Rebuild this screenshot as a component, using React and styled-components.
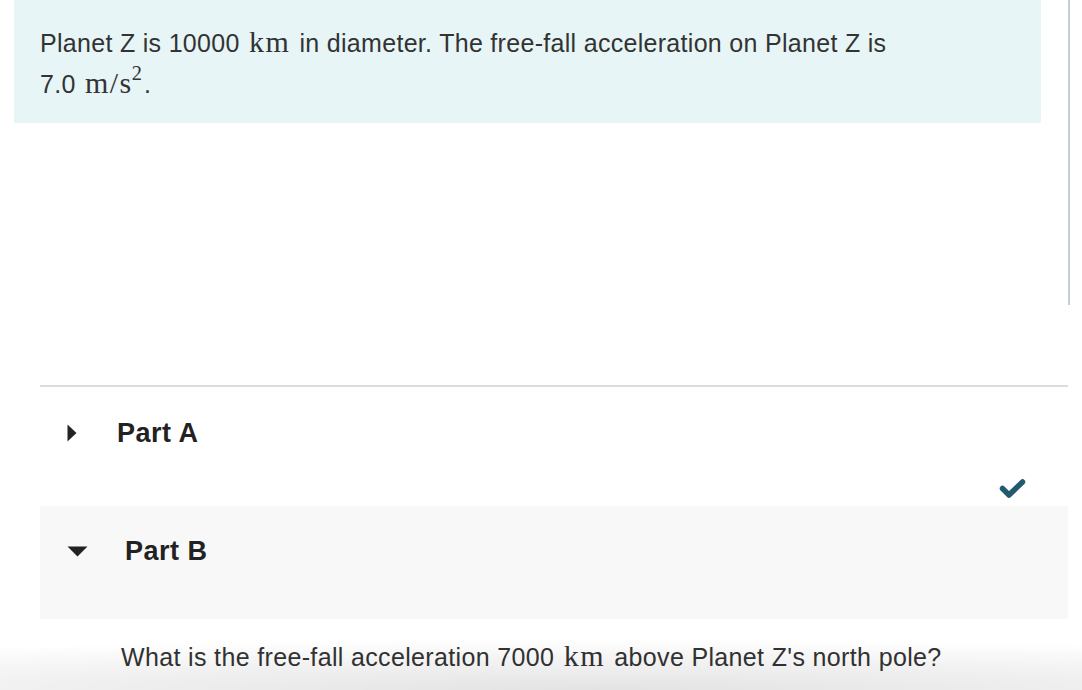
import React from "react";
import styled, { createGlobalStyle } from "styled-components";

const Global = createGlobalStyle`
  html, body { margin: 0; padding: 0; background: #fff; }
  body { font-family: "Liberation Sans", Arial, sans-serif; color: #333; width: 1082px; height: 690px; overflow: hidden; }
`;

const Page = styled.div`
  position: relative;
  width: 1082px;
  height: 690px;
  overflow: hidden;
`;

const Intro = styled.div`
  margin-left: 14px;
  width: 1027px;
  height: 123px;
  box-sizing: border-box;
  background: #e7f5f6;
  padding: 22px 0 0 26px;
  font-size: 25px;
  letter-spacing: 0.3px;
  line-height: 39px;
  color: #333;
`;

const Math = styled.span`
  font-family: "Liberation Serif", "DejaVu Serif", serif;
  font-size: 1.2em;
  letter-spacing: 1.5px;
  padding: 0 2px;
`;

const Sup = styled.sup`
  font-size: 0.68em;
  line-height: 0;
  letter-spacing: 0;
  margin-left: -1px;
  vertical-align: 0.65em;
`;

const ScrollTrack = styled.div`
  position: absolute;
  left: 1068px;
  top: 0;
  width: 2px;
  height: 305px;
  background: #c2cfdc;
`;

const Parts = styled.div`
  margin: 262px 14px 0 40px;
  border-top: 2px solid #dcdcdc;
`;

const PartRow = styled.div`
  display: flex;
  height: ${(p) => p.$h}px;
  box-sizing: border-box;
  align-items: flex-start;
  padding-top: ${(p) => p.$pt}px;
  background: ${(p) => (p.$open ? "#f8f8f8" : "transparent")};
  position: relative;
`;

const Arrow = styled.div`
  width: ${(p) => p.$w}px;
  height: 30px;
  display: flex;
  align-items: center;
  justify-content: center;
  margin-left: ${(p) => p.$ml}px;
`;

const PartTitle = styled.div`
  font-weight: bold;
  font-size: 27px;
  letter-spacing: 0.5px;
  line-height: 30px;
  color: #222;
  margin-left: ${(p) => p.$ml}px;
`;

const Check = styled.svg`
  position: absolute;
  right: 42px;
  top: 91px;
`;

const Question = styled.div`
  padding: 20px 0 0 121px;
  font-size: 25px;
  letter-spacing: 0.35px;
  color: #333;
`;

const Fade = styled.div`
  position: absolute;
  left: 0;
  right: 0;
  bottom: 0;
  height: 64px;
  pointer-events: none;
  background: radial-gradient(ellipse 130% 100% at 55% 100%, rgba(0,0,0,0.11) 0%, rgba(0,0,0,0.05) 45%, rgba(0,0,0,0) 80%);
`;

export default function App() {
  return (
    <Page>
      <Global />
      <Intro>
        Planet Z is 10000 <Math>km</Math> in diameter. The free-fall acceleration on Planet Z is
        <br />
        7.0 <Math>m/s<Sup>2</Sup></Math>.
      </Intro>
      <ScrollTrack />
      <Parts>
        <PartRow $h={119} $pt={31}>
          <Arrow $w={10} $ml={27}>
            <svg width="10" height="18" viewBox="0 0 10 18"><path d="M0.5 0.5 L9.5 9 L0.5 17.5 Z" fill="#222" /></svg>
          </Arrow>
          <PartTitle $ml={40}>Part A</PartTitle>
          <Check width="27" height="21" viewBox="0 0 27 21">
            <path d="M3.5 10.5 L10 17 L23.5 4" fill="none" stroke="#245a70" strokeWidth="5.5" strokeLinecap="round" strokeLinejoin="round" />
          </Check>
        </PartRow>
        <PartRow $h={113} $pt={30} $open>
          <Arrow $w={22} $ml={26}>
            <svg width="21" height="11" viewBox="0 0 21 11"><path d="M0.5 0.5 L20.5 0.5 L10.5 10.5 Z" fill="#222" /></svg>
          </Arrow>
          <PartTitle $ml={37}>Part B</PartTitle>
        </PartRow>
      </Parts>
      <Question>
        What is the free-fall acceleration 7000 <Math>km</Math> above Planet Z's north pole?
      </Question>
      <Fade />
    </Page>
  );
}
